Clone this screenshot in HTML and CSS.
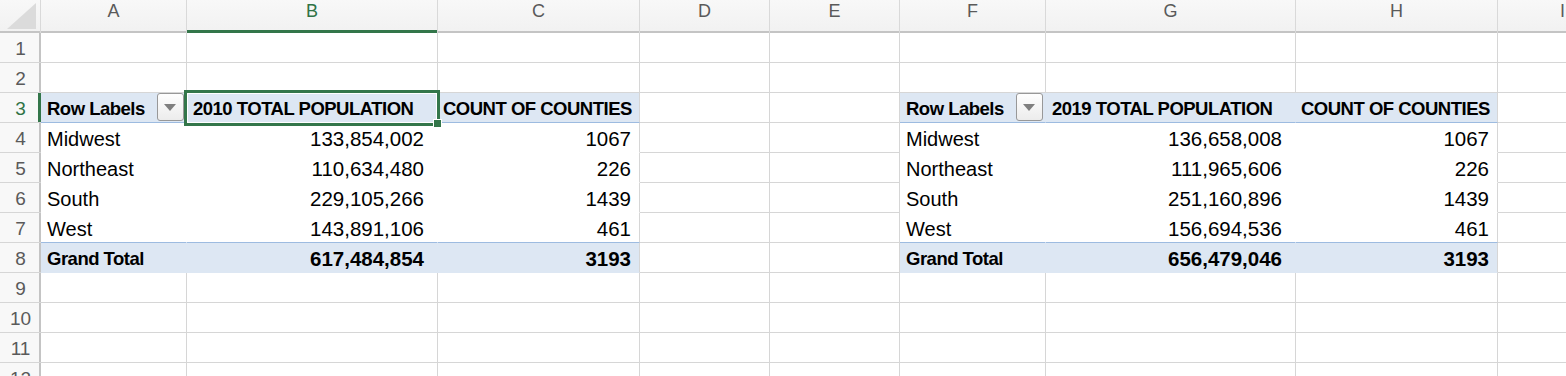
FILE: index.html
```html
<!DOCTYPE html>
<html lang="en">
<head>
    <meta charset="UTF-8">
    <title>Pivot tables</title>
    <link rel="stylesheet" href="styles.css">
</head>
<body>
    <table class="sheet">
        <colgroup>
            <col class="w-rh">
            <col class="w-a">
            <col class="w-b">
            <col class="w-c">
            <col class="w-d">
            <col class="w-e">
            <col class="w-f">
            <col class="w-g">
            <col class="w-h">
            <col class="w-i">
        </colgroup>
        <thead>
            <tr>
                <th class="corner"><span class="corner-tri"></span></th>
                <th>A</th>
                <th class="sel-col">B</th>
                <th>C</th>
                <th>D</th>
                <th>E</th>
                <th>F</th>
                <th>G</th>
                <th>H</th>
                <th>I</th>
            </tr>
        </thead>
        <tbody>
            <tr>
                <th class="rh">1</th>
                <td></td><td></td><td></td><td></td><td></td><td></td><td></td><td></td><td></td>
            </tr>
            <tr>
                <th class="rh">2</th>
                <td></td><td></td><td></td><td></td><td></td><td></td><td></td><td></td><td></td>
            </tr>
            <!-- pivot headers -->
            <tr class="pv-top">
                <th class="rh sel-row">3</th>
                <td class="pv pv-head has-btn">Row Labels<span class="filter-btn"></span></td>
                <td class="pv pv-head selected">2010 TOTAL POPULATION<span class="sel-box"></span><span class="fill-handle"></span></td>
                <td class="pv pv-head pv-end">COUNT OF COUNTIES</td>
                <td></td>
                <td></td>
                <td class="pv pv-head has-btn">Row Labels<span class="filter-btn"></span></td>
                <td class="pv pv-head">2019 TOTAL POPULATION</td>
                <td class="pv pv-head pv-end">COUNT OF COUNTIES</td>
                <td></td>
            </tr>
            <tr>
                <th class="rh">4</th>
                <td class="pv">Midwest</td>
                <td class="pv num wide">133,854,002</td>
                <td class="pv pv-end num">1067</td>
                <td></td><td></td>
                <td class="pv">Midwest</td>
                <td class="pv num wide">136,658,008</td>
                <td class="pv pv-end num">1067</td>
                <td></td>
            </tr>
            <tr>
                <th class="rh">5</th>
                <td class="pv">Northeast</td>
                <td class="pv num wide">110,634,480</td>
                <td class="pv pv-end num">226</td>
                <td></td><td></td>
                <td class="pv">Northeast</td>
                <td class="pv num wide">111,965,606</td>
                <td class="pv pv-end num">226</td>
                <td></td>
            </tr>
            <tr>
                <th class="rh">6</th>
                <td class="pv">South</td>
                <td class="pv num wide">229,105,266</td>
                <td class="pv pv-end num">1439</td>
                <td></td><td></td>
                <td class="pv">South</td>
                <td class="pv num wide">251,160,896</td>
                <td class="pv pv-end num">1439</td>
                <td></td>
            </tr>
            <tr class="pv-before-total">
                <th class="rh">7</th>
                <td class="pv">West</td>
                <td class="pv num wide">143,891,106</td>
                <td class="pv pv-end num">461</td>
                <td></td><td></td>
                <td class="pv">West</td>
                <td class="pv num wide">156,694,536</td>
                <td class="pv pv-end num">461</td>
                <td></td>
            </tr>
            <tr class="pv-total">
                <th class="rh">8</th>
                <td class="pv pv-head">Grand Total</td>
                <td class="pv pv-head num wide">617,484,854</td>
                <td class="pv pv-head pv-end num">3193</td>
                <td></td><td></td>
                <td class="pv pv-head">Grand Total</td>
                <td class="pv pv-head num wide">656,479,046</td>
                <td class="pv pv-head pv-end num">3193</td>
                <td></td>
            </tr>
            <tr>
                <th class="rh">9</th>
                <td></td><td></td><td></td><td></td><td></td><td></td><td></td><td></td><td></td>
            </tr>
            <tr>
                <th class="rh">10</th>
                <td></td><td></td><td></td><td></td><td></td><td></td><td></td><td></td><td></td>
            </tr>
            <tr>
                <th class="rh">11</th>
                <td></td><td></td><td></td><td></td><td></td><td></td><td></td><td></td><td></td>
            </tr>
            <tr>
                <th class="rh">12</th>
                <td></td><td></td><td></td><td></td><td></td><td></td><td></td><td></td><td></td>
            </tr>
        </tbody>
    </table>
</body>
</html>
```

FILE: styles.css
```css
html, body {
    margin: 0;
    padding: 0;
    background: #fff;
    overflow: hidden;
}
.sheet {
    table-layout: fixed;
    border-collapse: separate;
    border-spacing: 0;
    width: 1628px;
    font-family: "Liberation Sans", Arial, sans-serif;
    color: #000;
}

/* column widths, each includes its 1px right gridline */
.w-rh { width: 41px; }
.w-a { width: 146px; }
.w-b { width: 251px; }
.w-c { width: 202px; }
.w-d { width: 130px; }
.w-e { width: 130px; }
.w-f { width: 146px; }
.w-g { width: 250px; }
.w-h { width: 202px; }
.w-i { width: 130px; }

/* column header */
thead tr {
    height: 33px;
}
thead th {
    padding: 0;
    vertical-align: top;
    line-height: 22px;
    font-size: 18px;
    font-weight: normal;
    color: #5a5a5a;
    background: linear-gradient(#f8f8f8, #f1f1f1);
    border-right: 1px solid #d9d9d9;
    box-shadow: inset 0 -2px 0 #c4c4c4;
    text-align: center;
}
thead th.sel-col {
    color: #2f7346;
    box-shadow: inset 0 -3px 0 #33764a;
}
.corner {
    position: relative;
}
.corner-tri {
    position: absolute;
    right: 4px;
    bottom: 4px;
    width: 29px;
    height: 26px;
    background: #dbdbdb;
    clip-path: polygon(100% 0, 100% 100%, 0 100%);
}

/* body cells */
tbody tr {
    height: 30px;
}
tbody td {
    padding: 0 6px 1px 6px;
    vertical-align: bottom;
    line-height: 24px;
    font-size: 20px;
    white-space: nowrap;
    overflow: hidden;
    border-right: 1px solid #d6d6d6;
    border-bottom: 1px solid #d6d6d6;
}
.rh {
    padding: 0 0 1px 0;
    vertical-align: bottom;
    line-height: 24px;
    font-size: 19px;
    font-weight: normal;
    color: #5a5a5a;
    text-align: center;
    background: #f8f8f8;
    border-bottom: 1px solid #d6d6d6;
    box-shadow: inset -2px 0 0 #c4c4c4;
}
.rh.sel-row {
    color: #2f7346;
    box-shadow: inset -3px 0 0 #33764a;
}

/* pivot table style */
tbody td.pv {
    border-right-color: transparent;
    border-bottom-color: transparent;
}
tbody td.pv-end {
    border-right-color: #d6d6d6;
}
.pv-head {
    background: #dde7f3;
    font-weight: bold;
    font-size: 18.5px;
    letter-spacing: -0.5px;
}
.pv-top td.pv {
    border-bottom-color: #9dbbe0;
}
.pv-before-total td.pv {
    border-bottom-color: #9dbbe0;
}
.num {
    text-align: right;
    font-size: 20.5px;
    padding-right: 8px;
}
.num.wide {
    padding-right: 13px;
}
.pv-head.num {
    font-size: 20.5px;
    letter-spacing: 0;
}
td.pv-head.pv-end,
.pv-top td.pv-end {
    padding-left: 5px;
}

/* filter dropdown button */
.has-btn {
    position: relative;
}
.filter-btn {
    position: absolute;
    right: 2px;
    top: 0;
    width: 25px;
    height: 26px;
    border: 1px solid #989898;
    border-radius: 3px;
    background: linear-gradient(#fefefe, #ececec);
}
.filter-btn::after {
    content: "";
    position: absolute;
    left: 6px;
    top: 10px;
    border-left: 6px solid transparent;
    border-right: 6px solid transparent;
    border-top: 7px solid #7f7f7f;
}

/* active cell */
td.selected {
    position: relative;
    overflow: visible;
}
.sel-box {
    position: absolute;
    left: -3px;
    top: -3px;
    right: -3px;
    bottom: -4px;
    border: 3px solid #33764a;
    box-shadow: inset 0 0 0 1px #fff;
}
.fill-handle {
    position: absolute;
    right: -5px;
    bottom: -6px;
    width: 7px;
    height: 7px;
    background: #33764a;
    border: 1px solid #fff;
}
```
